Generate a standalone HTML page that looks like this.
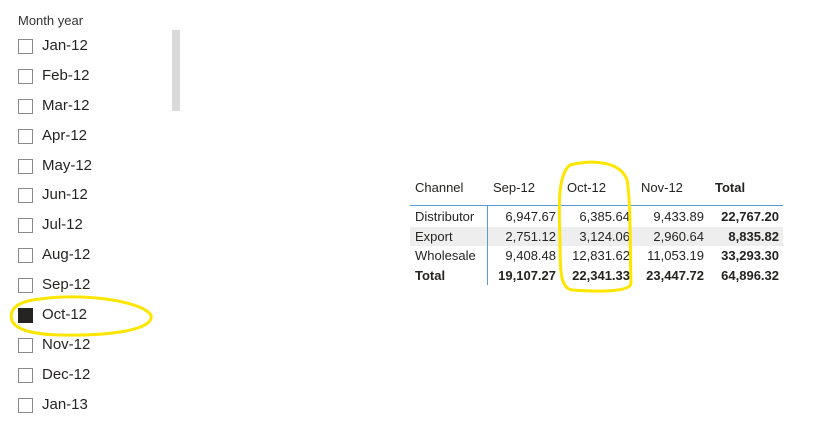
<!DOCTYPE html>
<html><head><meta charset="utf-8"><style>
body{margin:0;width:814px;height:430px;background:#fff;position:relative;overflow:hidden;font-family:"Liberation Sans",sans-serif;color:#252423}
.t{position:absolute;left:18px;top:13px;font-size:13px;color:#333}
.it{position:absolute;left:18px;height:20px;font-size:15px;line-height:20px}
.cb{position:absolute;left:0;top:3px;width:13px;height:13px;border:1px solid #8a8a8a;box-sizing:border-box;width:15px;height:15px}
.it span{position:absolute;left:24px;top:0;white-space:nowrap}
.sb{position:absolute;left:172px;top:30px;width:8px;height:81px;background:#d9d9d9}
.c{position:absolute;font-size:13px;line-height:19px;white-space:nowrap}
.r{text-align:right}
.b{font-weight:bold}
</style></head><body>
<div class="t">Month year</div>
<div class="sb"></div>
<div class="it" style="top:36px"><div class="cb"></div><span>Jan-12</span></div>
<div class="it" style="top:66px"><div class="cb"></div><span>Feb-12</span></div>
<div class="it" style="top:96px"><div class="cb"></div><span>Mar-12</span></div>
<div class="it" style="top:126px"><div class="cb"></div><span>Apr-12</span></div>
<div class="it" style="top:156px"><div class="cb"></div><span>May-12</span></div>
<div class="it" style="top:185px"><div class="cb"></div><span>Jun-12</span></div>
<div class="it" style="top:215px"><div class="cb"></div><span>Jul-12</span></div>
<div class="it" style="top:245px"><div class="cb"></div><span>Aug-12</span></div>
<div class="it" style="top:275px"><div class="cb"></div><span>Sep-12</span></div>
<div class="it" style="top:305px"><div class="cb" style="background:#252423;border-color:#252423"></div><span>Oct-12</span></div>
<div class="it" style="top:335px"><div class="cb"></div><span>Nov-12</span></div>
<div class="it" style="top:365px"><div class="cb"></div><span>Dec-12</span></div>
<div class="it" style="top:395px"><div class="cb"></div><span>Jan-13</span></div>

<div style="position:absolute;left:410px;top:227px;width:373px;height:19px;background:#eee"></div>
<div style="position:absolute;left:410px;top:205px;width:373px;height:1px;background:#5b9bd5"></div>
<div style="position:absolute;left:487px;top:206px;width:1px;height:79px;background:#5b9bd5"></div>

<div class="c" style="left:415px;top:178px">Channel</div>
<div class="c" style="left:493px;top:178px">Sep-12</div>
<div class="c" style="left:567px;top:178px">Oct-12</div>
<div class="c" style="left:641px;top:178px">Nov-12</div>
<div class="c b" style="left:715px;top:178px">Total</div>

<div class="c" style="left:415px;top:207px">Distributor</div>
<div class="c" style="left:415px;top:227px">Export</div>
<div class="c" style="left:415px;top:246px">Wholesale</div>
<div class="c b" style="left:415px;top:266px">Total</div>

<div class="c r" style="right:258px;top:207px">6,947.67</div>
<div class="c r" style="right:184px;top:207px">6,385.64</div>
<div class="c r" style="right:110px;top:207px">9,433.89</div>
<div class="c r b" style="right:35px;top:207px">22,767.20</div>
<div class="c r" style="right:258px;top:227px">2,751.12</div>
<div class="c r" style="right:184px;top:227px">3,124.06</div>
<div class="c r" style="right:110px;top:227px">2,960.64</div>
<div class="c r b" style="right:35px;top:227px">8,835.82</div>
<div class="c r" style="right:258px;top:246px">9,408.48</div>
<div class="c r" style="right:184px;top:246px">12,831.62</div>
<div class="c r" style="right:110px;top:246px">11,053.19</div>
<div class="c r b" style="right:35px;top:246px">33,293.30</div>
<div class="c r b" style="right:258px;top:266px">19,107.27</div>
<div class="c r b" style="right:184px;top:266px">22,341.33</div>
<div class="c r b" style="right:110px;top:266px">23,447.72</div>
<div class="c r b" style="right:35px;top:266px">64,896.32</div>

<svg style="position:absolute;left:0;top:0" width="814" height="430">
<path d="M570,165 C590,160 620,160 627,180 C631,200 630,260 631,283 C631,292 600,292 572,290 C560,288 560,270 560,240 C559,210 557,175 570,165 Z" fill="none" stroke="#ffe600" stroke-width="3"/>
<path d="M40,299 C80,293 140,300 151,315 C155,330 110,336 60,335 C20,334 8,325 12,312 C15,303 30,300 40,299" fill="none" stroke="#ffe600" stroke-width="3"/>
</svg>
</body></html>
